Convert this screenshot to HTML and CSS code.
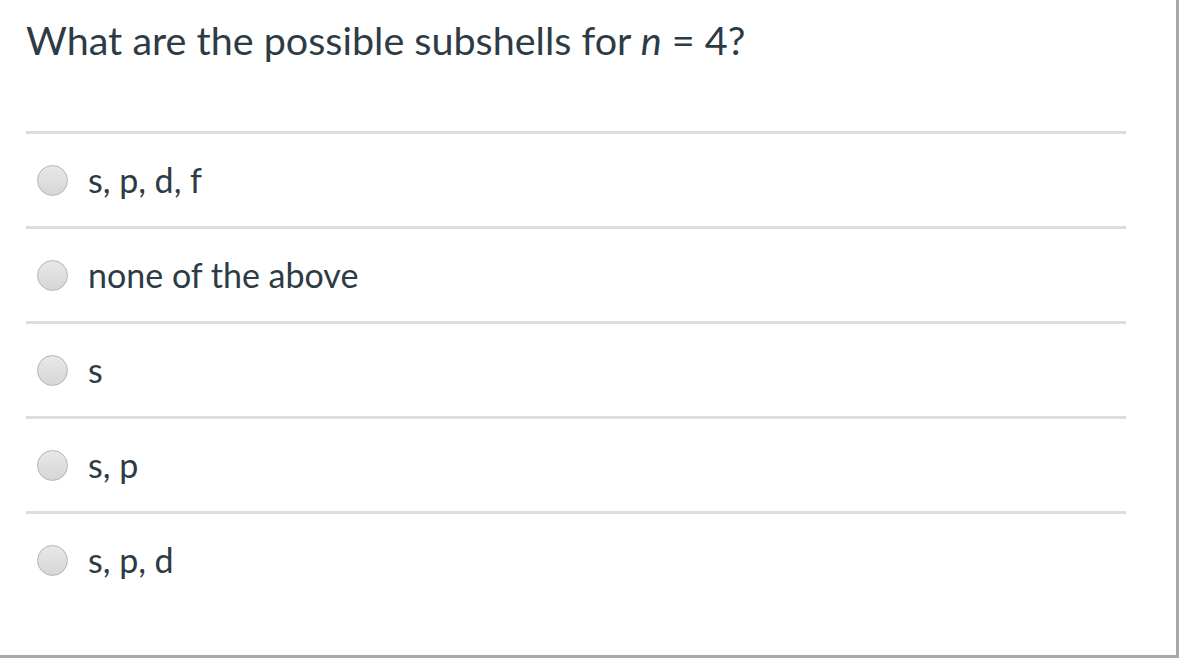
FILE: index.html
```html
<!DOCTYPE html>
<html>
<head>
<meta charset="utf-8">
<link rel="stylesheet" href="styles.css">
</head>
<body>
<div class="card">
  <div class="inner">
    <h1 class="question">What are the possible subshells for <em>n</em> = 4?</h1>
    <ul class="answers">
      <li class="answer"><span class="radio"></span><span class="label">s, p, d, f</span></li>
      <li class="answer"><span class="radio"></span><span class="label">none of the above</span></li>
      <li class="answer"><span class="radio"></span><span class="label">s</span></li>
      <li class="answer"><span class="radio"></span><span class="label">s, p</span></li>
      <li class="answer"><span class="radio"></span><span class="label">s, p, d</span></li>
    </ul>
  </div>
</div>
</body>
</html>
```
FILE: styles.css
```css
html, body {
  margin: 0;
  padding: 0;
  background: #ffffff;
}
body {
  font-family: Lato, "Open Sans", sans-serif;
  color: #2d3b45;
}
.card {
  width: 1176px;
  height: 655px;
  box-sizing: content-box;
  border-right: 3px solid #a8a8a8;
  border-bottom: 3px solid #a8a8a8;
  background: #fff;
}
.inner {
  padding: 0 50px 0 26px;
}
.question {
  margin: 0;
  padding-top: 16px;
  height: 131px;
  box-sizing: border-box;
  font-size: 39.5px;
  font-weight: 400;
  line-height: 48px;
}
.question em {
  font-style: italic;
}
.answers {
  list-style: none;
  margin: 0;
  padding: 0;
}
.answer {
  border-top: 3px solid #dedede;
  height: 92px;
  display: flex;
  align-items: center;
  padding-left: 11px;
}
.radio {
  width: 29px;
  height: 29px;
  border-radius: 50%;
  border: 1px solid #b5b5b5;
  background: linear-gradient(#e8e8e8, #d6d6d6);
  flex: none;
}
.label {
  margin-left: 20px;
  font-size: 34px;
  line-height: 40px;
}
```
